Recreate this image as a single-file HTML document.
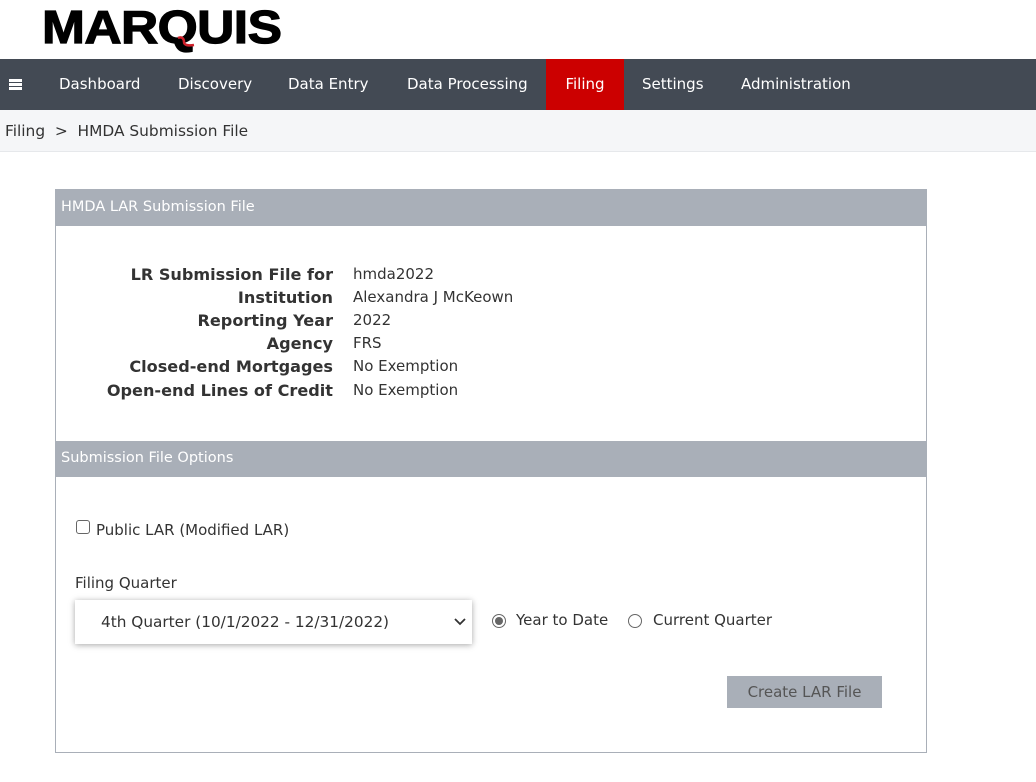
<!DOCTYPE html>
<html><head><style>
*{margin:0;padding:0;box-sizing:border-box}
body{width:1036px;height:782px;background:#fff;font-family:"DejaVu Sans",sans-serif;color:#333;position:relative;overflow:hidden;font-size:14px}
.abs{position:absolute}
.logo{left:42px;top:4px;font:900 46px/46px "Liberation Sans",sans-serif;letter-spacing:-0.5px;color:#000;transform:scaleX(1.12);transform-origin:left;-webkit-text-stroke:1.2px #000}
nav{left:0;top:59px;width:1036px;height:51px;background:#434a54}
nav span{position:absolute;top:0;height:51px;line-height:51px;color:#fff;font-size:15px}
.crumb{left:0;top:110px;width:1036px;height:42px;background:#f5f6f8;border-bottom:1px solid #e6e8eb;font-size:15.4px;line-height:42px;padding-left:5px;color:#333}
.panel{left:55px;top:189px;width:872px;height:564px;border:1px solid #a9afb8}
.hdr{position:absolute;left:0;width:870px;height:36px;background:#a9afb8;color:#fff;font-size:14.5px;line-height:34px;padding-left:5px}
.lab{position:absolute;right:593px;font-weight:bold;font-size:16.1px;text-align:right;white-space:nowrap}
.val{position:absolute;left:297px;font-size:15px;white-space:nowrap}
</style></head><body>
<div class="abs logo">MARQUIS</div>
<svg class="abs" style="left:176px;top:36px" width="22" height="12"><path d="M2 2 C6 0 8 3 8 6 C8 9 12 10 18 9" stroke="#d0202a" stroke-width="2.5" fill="none"/></svg>
<nav class="abs">
<div style="position:absolute;left:9px;top:20px;width:13px;height:3px;background:#fff;box-shadow:0 4px 0 #fff,0 8px 0 #fff"></div>
<span style="left:59px">Dashboard</span>
<span style="left:178px">Discovery</span>
<span style="left:288px">Data Entry</span>
<span style="left:407px">Data Processing</span>
<span style="left:546px;width:78px;background:#cc0000;text-align:center">Filing</span>
<span style="left:642px">Settings</span>
<span style="left:741px">Administration</span>
</nav>
<div class="abs crumb">Filing &nbsp;&gt;&nbsp; HMDA Submission File</div>
<div class="abs panel">
<div class="hdr" style="top:0">HMDA LAR Submission File</div>
<div class="lab" style="top:75px">LR Submission File for</div><div class="val" style="top:75px">hmda2022</div>
<div class="lab" style="top:98px">Institution</div><div class="val" style="top:98px">Alexandra J McKeown</div>
<div class="lab" style="top:121px">Reporting Year</div><div class="val" style="top:121px">2022</div>
<div class="lab" style="top:144px">Agency</div><div class="val" style="top:144px">FRS</div>
<div class="lab" style="top:167px">Closed-end Mortgages</div><div class="val" style="top:167px">No Exemption</div>
<div class="lab" style="top:191px">Open-end Lines of Credit</div><div class="val" style="top:191px">No Exemption</div>
<div class="hdr" style="top:251px">Submission File Options</div>
<div style="position:absolute;left:20px;top:330px;width:14px;height:14px;border:1px solid #666;border-radius:3px"></div>
<div style="position:absolute;left:40px;top:331px;font-size:15px">Public LAR (Modified LAR)</div>
<div style="position:absolute;left:19px;top:384px;font-size:15px">Filing Quarter</div>
<div style="position:absolute;left:19px;top:410px;width:397px;height:44px;background:#fff;box-shadow:0 1px 6px rgba(0,0,0,.35);font-size:15.3px;line-height:44px;padding-left:26px">4th Quarter (10/1/2022 - 12/31/2022)
<svg style="position:absolute;right:6px;top:18px" width="12" height="8"><path d="M1 1l5 5 5-5" stroke="#333" stroke-width="1.8" fill="none"/></svg></div>
<div style="position:absolute;left:436px;top:424px;width:14px;height:14px;border:1px solid #666;border-radius:50%"><div style="margin:2px;width:8px;height:8px;border-radius:50%;background:#666"></div></div>
<div style="position:absolute;left:460px;top:421px;font-size:15px">Year to Date</div>
<div style="position:absolute;left:572px;top:424px;width:14px;height:14px;border:1px solid #666;border-radius:50%"></div>
<div style="position:absolute;left:597px;top:421px;font-size:15px">Current Quarter</div>
<div style="position:absolute;left:671px;top:486px;width:155px;height:32px;background:#a9afb8;color:#555;font-size:15px;line-height:32px;text-align:center">Create LAR File</div>
</div>
</body></html>
